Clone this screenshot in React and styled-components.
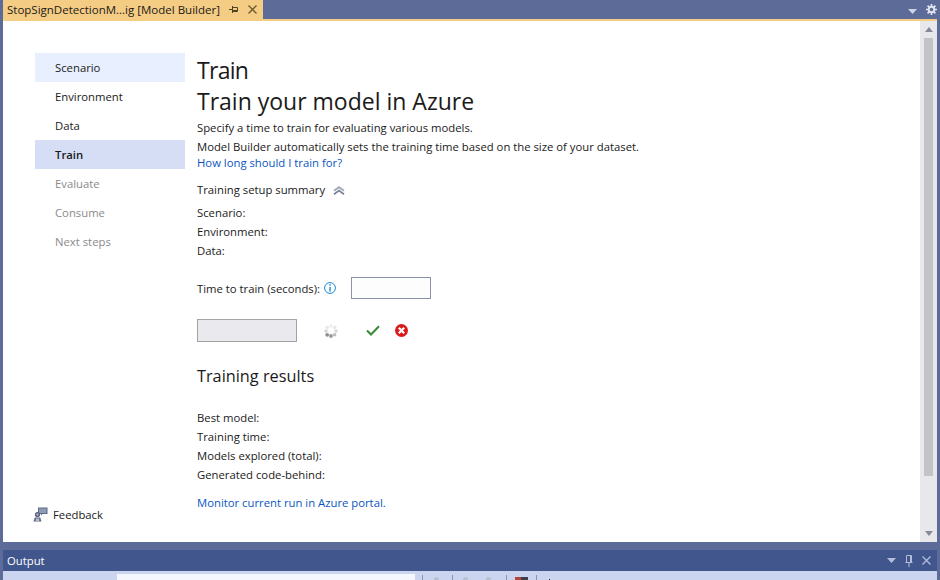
import React from 'react'
import styled, { createGlobalStyle } from 'styled-components'

const GlobalStyle = createGlobalStyle`
  html, body {
    margin: 0;
    padding: 0;
    background: #5d6b99;
  }
  body {
    font-family: "Open Sans", "Noto Sans", "Liberation Sans", sans-serif;
    font-size: 11.3px;
    color: #1a1a1a;
  }
`

const navItems = [
  { label: 'Scenario', state: 'hover' },
  { label: 'Environment' },
  { label: 'Data' },
  { label: 'Train', state: 'active' },
  { label: 'Evaluate', state: 'disabled' },
  { label: 'Consume', state: 'disabled' },
  { label: 'Next steps', state: 'disabled' },
]

const TabPinIcon = () => (
  <svg width="9" height="9" viewBox="0 0 9 9" fill="none" stroke="#4f4220">
    <path d="M0 4.5H3M3.5 1V8M3.5 2.5H8.5V6.5H3.5M3.5 5.5H8.5" />
  </svg>
)

const OutputPinIcon = () => (
  <svg width="8" height="12" viewBox="0 0 8 12" fill="none" stroke="#b4bedb">
    <path d="M0.5 7.5H7.5M1.5 7.5V0.5H6.5V7.5M5.5 0.5V7.5M4 8V12" />
  </svg>
)

const CloseIcon = ({ color = '#6b5a30', size = 9 }) => (
  <svg width={size} height={size} viewBox="0 0 9 9" fill="none" stroke={color} strokeWidth="1.3">
    <path d="M0.5 0.5L8.5 8.5M8.5 0.5L0.5 8.5" />
  </svg>
)

const Caret = ({ color = '#ced4e6' }) => (
  <svg width="9" height="5" viewBox="0 0 9 5">
    <path d="M0 0H9L4.5 5Z" fill={color} />
  </svg>
)

const GearIcon = () => (
  <svg width="11" height="11" viewBox="0 0 11 11" fill="none" stroke="#dfe3f0">
    <circle cx="5.5" cy="5.5" r="2.8" strokeWidth="2" />
    <path d="M5.5 0V2.5M5.5 8.5V11M0 5.5H2.5M8.5 5.5H11M1.6 1.6L3.3 3.3M7.7 7.7L9.4 9.4M9.4 1.6L7.7 3.3M3.3 7.7L1.6 9.4" strokeWidth="1.7" />
  </svg>
)

const FeedbackIcon = () => (
  <svg width="15" height="15" viewBox="0 0 15 15">
    <path d="M5 0.5H14.5V7H9.5L8 8.5V7H5Z" fill="#5f6b86" />
    <path d="M6 1.5H13.5V6H6Z" fill="#8f9ab5" />
    <circle cx="4.5" cy="7.5" r="2.6" fill="#59617a" />
    <circle cx="4.5" cy="7.5" r="1.2" fill="#a7adbd" />
    <path d="M0.5 14.5L1.8 10.5H7.2L8.5 14.5Z" fill="#5e667c" />
    <path d="M2.8 11.5H6.2V14.5H2.8Z" fill="#b7bdca" />
  </svg>
)

const ChevronsUp = () => (
  <svg width="12" height="9" viewBox="0 0 12 9" fill="none" strokeWidth="1.8">
    <path d="M1 4.8L6 1.2L11 4.8" stroke="#a2a8ba" />
    <path d="M1 8.2L6 4.6L11 8.2" stroke="#7a8298" />
  </svg>
)

const InfoIcon = () => (
  <svg width="12" height="12" viewBox="0 0 12 12" fill="none" stroke="#1a8ad4">
    <circle cx="6" cy="6" r="5.4" />
    <path d="M6 5V9.5" strokeWidth="1.4" />
    <path d="M6 2.3V3.8" strokeWidth="1.4" />
  </svg>
)

const Spinner = () => (
  <svg width="14" height="14" viewBox="0 0 14 14">
    <circle cx="7" cy="2" r="1.7" fill="#ececec" />
    <circle cx="10.8" cy="3.4" r="1.7" fill="#e6e6e6" />
    <circle cx="12" cy="7" r="1.8" fill="#d8d8d8" />
    <circle cx="10.6" cy="10.8" r="1.8" fill="#bdbdbd" />
    <circle cx="7" cy="12" r="1.9" fill="#9a9a9a" />
    <circle cx="3.2" cy="10.8" r="1.9" fill="#8f8f8f" />
    <circle cx="2" cy="7" r="1.8" fill="#d4d4d4" />
    <circle cx="3.2" cy="3.4" r="1.7" fill="#e8e8e8" />
  </svg>
)

const CheckIcon = () => (
  <svg width="14" height="11" viewBox="0 0 14 11" fill="none">
    <path d="M1 5.5L5 9.5L13 1.2" stroke="#388a34" strokeWidth="2" />
  </svg>
)

const ErrorIcon = () => (
  <svg width="13" height="13" viewBox="0 0 13 13" fill="none">
    <circle cx="6.5" cy="6.5" r="6.5" fill="#dc1a1a" />
    <path d="M3.8 3.8L9.2 9.2M9.2 3.8L3.8 9.2" stroke="#fff" strokeWidth="2.2" />
  </svg>
)

const App = () => {
  return (
    <Page>
      <GlobalStyle />
      <TabStrip>
        <Tab>
          <TabTitle>StopSignDetectionM...ig [Model Builder]</TabTitle>
          <TabPinIcon />
          <CloseIcon />
        </Tab>
        <StripTools>
          <StripCaret>
            <Caret />
          </StripCaret>
          <GearIcon />
        </StripTools>
      </TabStrip>
      <TabLine />
      <Document>
        <Sidebar>
          <NavList>
            {navItems.map((item) => (
              <NavItem key={item.label} $state={item.state}>
                {item.label}
              </NavItem>
            ))}
          </NavList>
          <Feedback>
            <FeedbackIcon />
            Feedback
          </Feedback>
        </Sidebar>
        <Main>
          <PageTitle>Train</PageTitle>
          <Title>Train your model in Azure</Title>
          <Description>Specify a time to train for evaluating various models.</Description>
          <TextLine>Model Builder automatically sets the training time based on the size of your dataset.</TextLine>
          <BlueLink>How long should I train for?</BlueLink>
          <SummaryToggle>
            Training setup summary
            <ChevronsUp />
          </SummaryToggle>
          <SummaryList>
            <TextRow>Scenario:</TextRow>
            <TextRow>Environment:</TextRow>
            <TextRow>Data:</TextRow>
          </SummaryList>
          <TimeRow>
            Time to train (seconds):
            <InfoIcon />
            <TimeInput />
          </TimeRow>
          <ActionRow>
            <DisabledButton />
            <SpinnerSlot>
              <Spinner />
            </SpinnerSlot>
            <CheckSlot>
              <CheckIcon />
            </CheckSlot>
            <ErrorIcon />
          </ActionRow>
          <SectionTitle>Training results</SectionTitle>
          <ResultList>
            <TextRow>Best model:</TextRow>
            <TextRow>Training time:</TextRow>
            <TextRow>Models explored (total):</TextRow>
            <TextRow>Generated code-behind:</TextRow>
          </ResultList>
          <PortalLink>Monitor current run in Azure portal.</PortalLink>
        </Main>
        <Scrollbar>
          <ScrollArrow $up />
          <ScrollThumb />
          <ScrollArrow />
        </Scrollbar>
      </Document>
      <OutputHeader>
        <OutputTitle>Output</OutputTitle>
        <OutputTools>
          <Caret color="#b4bedb" />
          <OutputPinIcon />
          <CloseIcon color="#b4bedb" size={9} />
        </OutputTools>
      </OutputHeader>
      <OutputToolbar>
        <OutputSelect />
        <ToolSeparator $gap={7} />
        <ToolDot $gap={11} />
        <ToolSeparator $gap={13} />
        <ToolDot $gap={10} />
        <ToolDot $gap={18} />
        <ToolSeparator $gap={15} />
        <ToolFlag />
        <ToolSeparator $gap={8} />
        <ToolTick />
      </OutputToolbar>
    </Page>
  )
}

export default App

const Page = styled.div`
  width: 940px;
  height: 580px;
  display: flex;
  flex-direction: column;
  overflow: hidden;
  background: #5d6b99;
`

const TabStrip = styled.div`
  height: 19px;
  padding: 0 3px;
  display: flex;
  justify-content: space-between;
  flex-shrink: 0;
`

const Tab = styled.div`
  width: 260px;
  padding-left: 4px;
  box-sizing: border-box;
  background: #f5cc84;
  display: flex;
  align-items: center;
`

const TabTitle = styled.span`
  font-size: 11.5px;
  white-space: nowrap;
  margin-right: 9px;

  & + svg {
    margin-right: 10px;
  }
`

const StripTools = styled.div`
  display: flex;
  align-items: center;
  gap: 9px;
`

const StripCaret = styled.div`
  display: flex;
  margin-top: 3px;
`

const TabLine = styled.div`
  height: 2px;
  margin: 0 3px;
  background: #f5cc84;
  flex-shrink: 0;
`

const Document = styled.div`
  height: 521px;
  margin: 0 3px;
  background: #fff;
  display: flex;
  flex-shrink: 0;
`

const Sidebar = styled.nav`
  width: 182px;
  padding: 32px 0 20px 32px;
  box-sizing: border-box;
  display: flex;
  flex-direction: column;
  justify-content: space-between;
  flex-shrink: 0;
`

const NavList = styled.div`
  display: flex;
  flex-direction: column;
`

const navBackground = {
  hover: '#e8effe',
  active: '#d6def6',
}

const NavItem = styled.div`
  height: 29px;
  line-height: 29px;
  padding-left: 20px;
  background: ${({ $state }) => navBackground[$state] || 'transparent'};
  color: ${({ $state }) => ($state === 'disabled' ? '#8a8a8a' : '#1a1a1a')};
  font-weight: ${({ $state }) => ($state === 'active' ? 600 : 400)};
`

const Feedback = styled.div`
  display: flex;
  align-items: center;
  gap: 5px;
  margin-left: -2px;
`

const Main = styled.main`
  flex: 1;
  padding: 34px 0 0 12px;
  display: flex;
  flex-direction: column;
  align-items: flex-start;
`

const Title = styled.h1`
  margin: 0;
  font-size: 23px;
  line-height: 31px;
  font-weight: 400;
`

const PageTitle = styled(Title)`
  letter-spacing: -0.7px;
`

const TextLine = styled.div`
  line-height: 16px;
`

const Description = styled(TextLine)`
  margin: 3px 0 3px;
`

const BlueLink = styled.a`
  line-height: 15px;
  color: #0a56bf;
`

const SummaryToggle = styled.div`
  margin-top: 12px;
  line-height: 16px;
  display: flex;
  align-items: center;
  gap: 8px;
`

const SummaryList = styled.div`
  margin-top: 5px;
  display: flex;
  flex-direction: column;
`

const TextRow = styled.div`
  height: 19px;
  line-height: 19px;
`

const TimeRow = styled.div`
  margin-top: 17px;
  height: 22px;
  display: flex;
  align-items: center;
  gap: 4px;
`

const TimeInput = styled.div`
  width: 78px;
  height: 20px;
  margin-left: 11px;
  border: 1px solid #8a93a8;
  background: #fdfdfe;
`

const ActionRow = styled.div`
  margin-top: 20px;
  display: flex;
  align-items: center;
`

const DisabledButton = styled.div`
  width: 98px;
  height: 21px;
  background: #eaeaee;
  border: 1px solid #a3a3a3;
`

const SpinnerSlot = styled.div`
  margin-left: 27px;
  display: flex;
`

const CheckSlot = styled.div`
  margin: 0 15px 0 28px;
  display: flex;
`

const SectionTitle = styled.h2`
  margin: 22px 0 0;
  font-size: 16.3px;
  line-height: 24px;
  font-weight: 400;
`

const ResultList = styled.div`
  margin-top: 20px;
  display: flex;
  flex-direction: column;
`

const PortalLink = styled(BlueLink)`
  margin-top: 11px;
`

const Scrollbar = styled.div`
  width: 17px;
  margin-left: auto;
  background: #e8e8ec;
  display: flex;
  flex-direction: column;
  align-items: center;
  flex-shrink: 0;
`

const ScrollArrow = styled.div`
  width: 0;
  height: 0;
  border-left: 4.5px solid transparent;
  border-right: 4.5px solid transparent;
  ${({ $up }) =>
    $up
      ? 'border-bottom: 5px solid #868999; margin: 6px 0;'
      : 'border-top: 5px solid #868999; margin: auto 0 6px;'}
`

const ScrollThumb = styled.div`
  width: 9px;
  height: 438px;
  background: #c2c3c9;
`

const OutputHeader = styled.div`
  height: 21px;
  margin: 8px 3px 0;
  padding: 0 6px 0 4px;
  background: #40568d;
  display: flex;
  align-items: center;
  justify-content: space-between;
  flex-shrink: 0;
`

const OutputTitle = styled.span`
  color: #fff;
`

const OutputTools = styled.div`
  display: flex;
  align-items: center;
  gap: 9px;
`

const OutputToolbar = styled.div`
  flex: 1;
  margin: 0 3px;
  padding: 3px 0 0 114px;
  background: #ccd5f0;
  display: flex;
  align-items: flex-start;
`

const OutputSelect = styled.div`
  width: 298px;
  height: 20px;
  background: #f5f7fe;
`

const ToolSeparator = styled.div`
  width: 1px;
  height: 10px;
  margin: 1px 0 0 ${({ $gap }) => $gap}px;
  background: #8a93b0;
`

const ToolDot = styled.div`
  width: 5px;
  height: 5px;
  margin: 3px 0 0 ${({ $gap }) => $gap}px;
  border-radius: 50%;
  background: #b8bfd4;
`

const ToolFlag = styled.div`
  width: 13px;
  height: 6px;
  margin: 3px 0 0 8px;
  background: linear-gradient(90deg, #b5443c 0 45%, #3a3f4a 45% 100%);
`

const ToolTick = styled.div`
  width: 1px;
  height: 4px;
  margin: 5px 0 0 12px;
  background: #1e1e1e;
`
